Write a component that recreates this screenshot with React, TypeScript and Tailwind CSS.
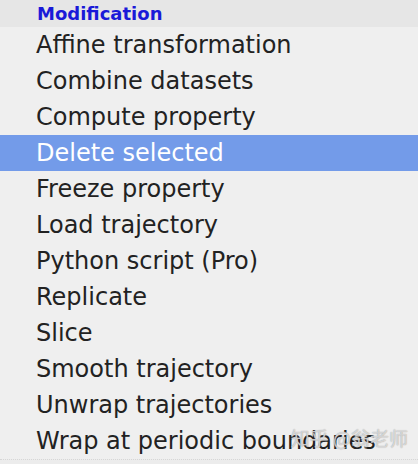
import React from "react";

const items = [
  "Affine transformation",
  "Combine datasets",
  "Compute property",
  "Delete selected",
  "Freeze property",
  "Load trajectory",
  "Python script (Pro)",
  "Replicate",
  "Slice",
  "Smooth trajectory",
  "Unwrap trajectories",
  "Wrap at periodic boundaries",
];

export default function App() {
  return (
    <div
      className="relative w-[418px] h-[464px] overflow-hidden bg-[#efefef] flex flex-col"
      style={{ fontFamily: "'DejaVu Sans', 'Noto Sans CJK SC', sans-serif" }}
    >
      <div className="h-[27px] shrink-0 bg-[#e6e6e6] flex items-center pl-[37px]">
        <span className="text-[18px] font-bold text-[#1a1ad8] leading-none">Modification</span>
      </div>
      {items.map((t, i) => (
        <div
          key={t}
          className={
            i === 3
              ? "h-[36px] shrink-0 flex items-center pl-[36px] bg-[#739be9] text-white text-[24px] whitespace-nowrap"
              : "h-[36px] shrink-0 flex items-center pl-[36px] text-[#222222] text-[24px] whitespace-nowrap"
          }
        >
          {t}
        </div>
      ))}
      <div className="flex-1 border-t border-dotted border-[#d6d6d6] bg-[#ececec]" />
      <div
        className="absolute right-[10px] top-[428px] text-[19px] text-white/60 leading-none"
        style={{ fontFamily: "'Noto Sans CJK SC', sans-serif", textShadow: "0 0 1px #888" }}
      >
        知乎 @翁老师
      </div>
    </div>
  );
}
